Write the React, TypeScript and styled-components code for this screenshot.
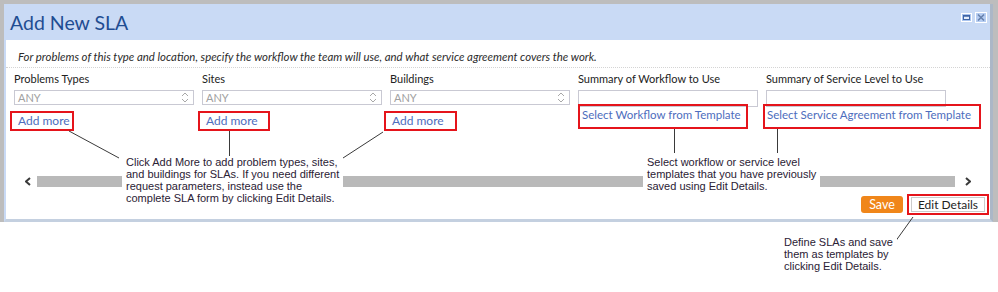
import React from 'react';
import styled, { createGlobalStyle } from 'styled-components';

const GlobalStyle = createGlobalStyle`
  html, body {
    margin: 0;
    padding: 0;
    background: #fff;
  }
  body {
    width: 998px;
    height: 292px;
    overflow: hidden;
    font-family: Lato, "Liberation Sans", sans-serif;
  }
`;

const Stage = styled.div`
  position: relative;
  width: 998px;
  height: 292px;
`;

const Frame = styled.div`
  box-sizing: border-box;
  height: 222px;
  padding: 4px 5px 0 4px;
  background: #bdbdbd;
`;

const Dialog = styled.div`
  box-sizing: border-box;
  height: 218px;
  display: flex;
  flex-direction: column;
  background: #fff;
  border-left: 2px solid #c9daf5;
  border-right: 3px solid #abb7c7;
  border-bottom: 3px solid #c4d0e0;
`;

const TitleBar = styled.div`
  height: 36px;
  margin-left: -2px;
  padding: 0 3px 0 6px;
  display: flex;
  align-items: center;
  justify-content: space-between;
  background: #c9daf5;
`;

const Title = styled.h1`
  margin: 0;
  font-size: 19.5px;
  font-weight: 400;
  color: #1f4d92;
`;

const TitleTools = styled.div`
  display: flex;
  gap: 3px;
  align-items: center;
  margin-top: -10px;
`;

const Body = styled.div`
  flex: 1;
  padding-left: 8px;
  display: flex;
  flex-direction: column;
`;

const Instruction = styled.p`
  margin: 9px 0 0 4px;
  font-size: 11.4px;
  line-height: 16px;
  font-style: italic;
  color: #2b2b2b;
`;

const Separator = styled.div`
  margin: 2px 0 0 -8px;
  border-top: 1px dotted #d4d4d4;
`;

const Fields = styled.div`
  margin-top: 4px;
  display: grid;
  grid-template-columns: repeat(5, 188px);
`;

const Field = styled.div`
  display: flex;
  flex-direction: column;
  align-items: flex-start;
`;

const Label = styled.label`
  font-size: 11px;
  line-height: 14px;
  color: #222;
`;

const Input = styled.div<{ $tall?: boolean }>`
  box-sizing: border-box;
  margin-top: 4px;
  width: 180px;
  height: ${({ $tall }) => ($tall ? '17px' : '15px')};
  padding: 0 4px 0 3px;
  display: flex;
  align-items: center;
  justify-content: space-between;
  border: 1px solid #c9c9d3;
  background: #fff;
  font-size: 11px;
  color: #a0a0a0;
`;

const HighlightLink = styled.a<{ $w: number; $shift?: number; $summary?: boolean }>`
  box-sizing: border-box;
  display: block;
  width: ${({ $w }) => $w}px;
  height: ${({ $summary }) => ($summary ? 25 : 20)}px;
  margin-top: ${({ $summary }) => ($summary ? -3 : 6)}px;
  margin-left: ${({ $shift }) => $shift ?? 0}px;
  padding-left: ${({ $summary }) => ($summary ? 2 : 6)}px;
  padding-top: ${({ $summary }) => ($summary ? 1 : 0)}px;
  border: 2px solid #e5141b;
  font-size: ${({ $summary }) => ($summary ? 11.5 : 12)}px;
  line-height: 16px;
  color: #4d6dbd;
  white-space: nowrap;
  cursor: pointer;
`;

const ScrollRow = styled.div`
  margin-top: 45px;
  height: 11px;
  display: flex;
  align-items: center;
`;

const ScrollTrack = styled.div`
  width: 918px;
  height: 11px;
  margin: 0 10px 0 6px;
  background: #b9b9b9;
`;

const Footer = styled.div`
  margin-top: 7px;
  padding-right: 1px;
  display: flex;
  justify-content: flex-end;
  align-items: center;
  gap: 4px;
`;

const SaveButton = styled.button`
  box-sizing: border-box;
  width: 42px;
  height: 17px;
  padding: 0;
  border: none;
  border-radius: 3px;
  background: #f0861a;
  color: #fff;
  font-family: Lato, "Liberation Sans", sans-serif;
  font-size: 12.5px;
  line-height: 17px;
`;

const EditHighlight = styled.div`
  box-sizing: border-box;
  width: 82px;
  height: 21px;
  padding: 1px 2px;
  border: 2px solid #e5141b;
  display: flex;
`;

const EditButton = styled.button`
  box-sizing: border-box;
  width: 100%;
  height: 15px;
  padding: 0;
  display: flex;
  align-items: center;
  justify-content: center;
  border: 1px solid #cbcbcb;
  background: #fff;
  color: #1e1e1e;
  font-family: Lato, "Liberation Sans", sans-serif;
  font-size: 12px;
  line-height: 13px;
`;

const Callout = styled.div<{ $x: number; $y: number }>`
  position: absolute;
  left: ${({ $x }) => $x}px;
  top: ${({ $y }) => $y}px;
  padding: 0 4px;
  background: #fff;
  font-family: "Liberation Sans", Arial, sans-serif;
  font-size: 11px;
  line-height: 12px;
  color: #2a2134;
  white-space: nowrap;
`;

const Leaders = styled.svg`
  position: absolute;
  left: 0;
  top: 0;
  pointer-events: none;
`;

const Spinner = () => (
  <svg width="8" height="13" viewBox="0 0 8 13">
    <path d="M1 5 L4 2 L7 5" fill="none" stroke="#a8a8a8" strokeWidth="1" />
    <path d="M1 8 L4 11 L7 8" fill="none" stroke="#a8a8a8" strokeWidth="1" />
  </svg>
);

const Chevron = ({ right }: { right?: boolean }) => (
  <svg width="6" height="9" viewBox="0 0 6 9">
    <path
      d={right ? 'M1 1 L5 4.5 L1 8' : 'M5 1 L1 4.5 L5 8'}
      fill="none"
      stroke="#3a3a3a"
      strokeWidth="2"
    />
  </svg>
);

const MaximizeIcon = () => (
  <svg width="11" height="9" viewBox="0 0 11 9">
    <rect x="0.5" y="0.5" width="10" height="8" fill="#aac4ee" stroke="#fff" />
    <rect x="2.5" y="2.5" width="6" height="4" fill="#e4edfb" stroke="#3f65a6" />
    <line x1="2.5" y1="3" x2="8.5" y2="3" stroke="#3f65a6" strokeWidth="1.5" />
  </svg>
);

const CloseIcon = () => (
  <svg width="12" height="11" viewBox="0 0 12 11">
    <rect x="0.5" y="0.5" width="11" height="10" fill="#b6cdf2" stroke="#fff" />
    <path d="M3 2.5 L9 8.5 M9 2.5 L3 8.5" stroke="#6782ad" strokeWidth="1.6" />
  </svg>
);

const PickerField = ({ label, w, shift }: { label: string; w: number; shift: number }) => (
  <Field>
    <Label>{label}</Label>
    <Input>
      ANY
      <Spinner />
    </Input>
    <HighlightLink $w={w} $shift={shift}>Add more</HighlightLink>
  </Field>
);

const SummaryField = ({ label, link, w, shift }: { label: string; link: string; w: number; shift: number }) => (
  <Field>
    <Label>{label}</Label>
    <Input $tall />
    <HighlightLink $w={w} $shift={shift} $summary>
      {link}
    </HighlightLink>
  </Field>
);

export default function App() {
  return (
    <Stage>
      <GlobalStyle />
      <Frame>
        <Dialog>
          <TitleBar>
            <Title>Add New SLA</Title>
            <TitleTools>
              <MaximizeIcon />
              <CloseIcon />
            </TitleTools>
          </TitleBar>
          <Body>
            <Instruction>
              For problems of this type and location, specify the workflow the team will use, and what service agreement
              covers the work.
            </Instruction>
            <Separator />
            <Fields>
              <PickerField label="Problems Types" w={64} shift={-4} />
              <PickerField label="Sites" w={72} shift={-4} />
              <PickerField label="Buildings" w={73} shift={-6} />
              <SummaryField label="Summary of Workflow to Use" link="Select Workflow from Template" w={170} shift={0} />
              <SummaryField
                label="Summary of Service Level to Use"
                link="Select Service Agreement from Template"
                w={218}
                shift={-3}
              />
            </Fields>
            <ScrollRow>
              <span style={{ width: 11 }} />
              <Chevron />
              <ScrollTrack />
              <Chevron right />
            </ScrollRow>
            <Footer>
              <SaveButton>Save</SaveButton>
              <EditHighlight>
                <EditButton>Edit Details</EditButton>
              </EditHighlight>
            </Footer>
          </Body>
        </Dialog>
      </Frame>

      <Leaders width="998" height="292" viewBox="0 0 998 292">
        <g stroke="#3a3a3a" strokeWidth="1">
          <line x1="69" y1="131" x2="119" y2="158" />
          <line x1="229.5" y1="131" x2="229.5" y2="157" />
          <line x1="383" y1="132" x2="343" y2="158" />
          <line x1="674.5" y1="129" x2="674.5" y2="153" />
          <line x1="777.5" y1="129" x2="777.5" y2="153" />
          <line x1="913" y1="217" x2="895" y2="242" />
        </g>
      </Leaders>

      <Callout $x={122} $y={156}>
        Click Add More to add problem types, sites,
        <br />
        and buildings for SLAs. If you need different
        <br />
        request parameters, instead use the
        <br />
        complete SLA form by clicking Edit Details.
      </Callout>
      <Callout $x={643} $y={156}>
        Select workflow or service level
        <br />
        templates that you have previously
        <br />
        saved using Edit Details.
      </Callout>
      <Callout $x={780} $y={236}>
        Define SLAs and save
        <br />
        them as templates by
        <br />
        clicking Edit Details.
      </Callout>
    </Stage>
  );
}
